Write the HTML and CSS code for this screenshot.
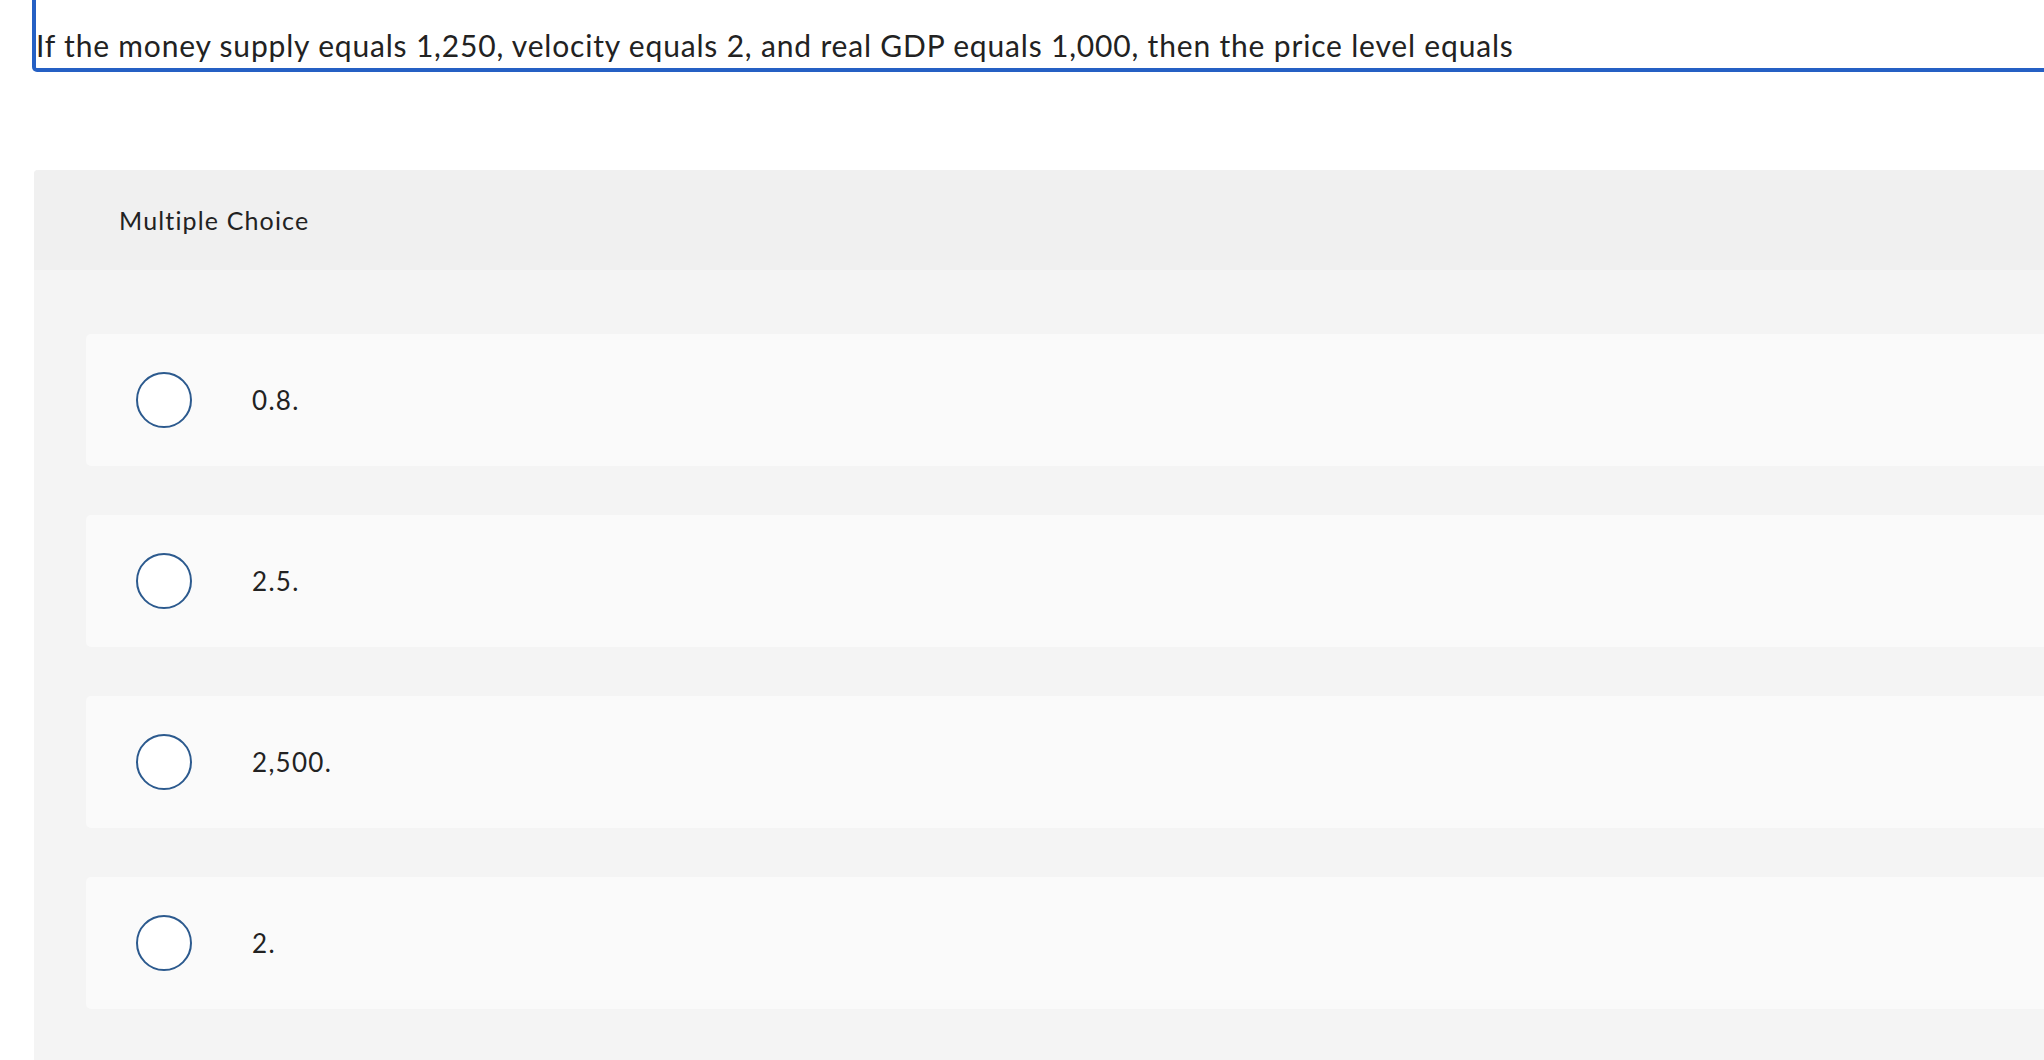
FILE: index.html
```html
<!DOCTYPE html>
<html lang="en">
<head>
<meta charset="utf-8">
<title>Multiple Choice</title>
<link rel="stylesheet" href="styles.css">
</head>
<body>
<main class="page">
  <div class="question">
    <p class="question-text">If the money supply equals 1,250, velocity equals 2, and real GDP equals 1,000, then the price level equals</p>
  </div>
  <section class="card">
    <header class="card-header">Multiple Choice</header>
    <div class="card-body">
      <label class="option"><span class="radio"></span><span class="option-text">0.8.</span></label>
      <label class="option"><span class="radio"></span><span class="option-text">2.5.</span></label>
      <label class="option"><span class="radio"></span><span class="option-text">2,500.</span></label>
      <label class="option"><span class="radio"></span><span class="option-text">2.</span></label>
    </div>
  </section>
</main>
</body>
</html>
```

FILE: styles.css
```css
html, body {
  margin: 0;
  padding: 0;
  background: #ffffff;
  overflow: hidden;
}

body {
  font-family: Lato, "Open Sans", "Liberation Sans", sans-serif;
  color: #222222;
}

.page {
  width: 2100px;
  padding-left: 32px;
  box-sizing: border-box;
}

.question {
  border: 4px solid #2560c4;
  border-top: none;
  border-radius: 0 0 5px 5px;
  padding: 25px 0 3px 0;
}

.question-text {
  margin: 0;
  font-size: 30px;
  line-height: 40px;
  letter-spacing: 0.82px;
  color: #222222;
}

.card {
  margin-top: 98px;
  margin-left: 2px;
  border-radius: 4px 4px 0 0;
  overflow: hidden;
  background: #f4f4f4;
}

.card-header {
  height: 100px;
  background: #f0f0f0;
  display: flex;
  align-items: center;
  padding-left: 85px;
  font-size: 25px;
  letter-spacing: 1.15px;
  color: #222222;
}

.card-body {
  padding: 64px 0 60px 52px;
  display: flex;
  flex-direction: column;
  gap: 49px;
}

.option {
  height: 132px;
  background: #fafafa;
  border-radius: 5px 0 0 5px;
  display: flex;
  align-items: center;
}

.radio {
  width: 52px;
  height: 52px;
  border: 2px solid #2c5a8e;
  border-radius: 50%;
  background: #ffffff;
  margin-left: 50px;
  flex: none;
}

.option-text {
  margin-left: 60px;
  font-size: 26px;
  letter-spacing: 1.3px;
  color: #222222;
}
```
